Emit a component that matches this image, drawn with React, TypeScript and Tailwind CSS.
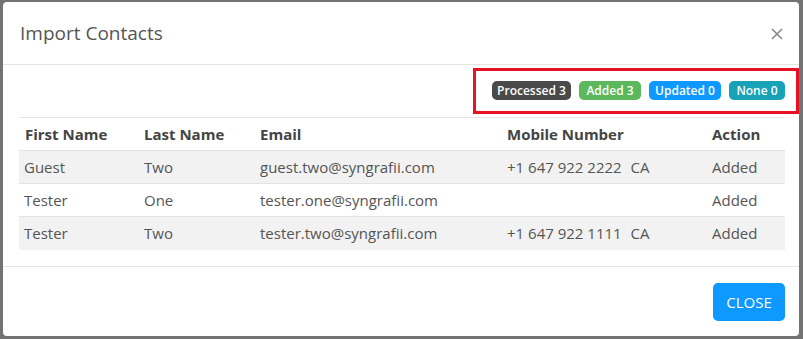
import React from 'react';

type Row = {
  first: string;
  last: string;
  email: string;
  mobile: string;
  country: string;
  action: string;
};

const rows: Row[] = [
  { first: 'Guest', last: 'Two', email: 'guest.two@syngrafii.com', mobile: '+1 647 922 2222', country: 'CA', action: 'Added' },
  { first: 'Tester', last: 'One', email: 'tester.one@syngrafii.com', mobile: '', country: '', action: 'Added' },
  { first: 'Tester', last: 'Two', email: 'tester.two@syngrafii.com', mobile: '+1 647 922 1111', country: 'CA', action: 'Added' },
];

const badges = [
  { label: 'Processed 3', cls: 'bg-[#4a4a4a] w-[79px]' },
  { label: 'Added 3', cls: 'bg-[#5cb85c] w-[62px]' },
  { label: 'Updated 0', cls: 'bg-[#0d99ff] w-[72px]' },
  { label: 'None 0', cls: 'bg-[#17a2b8] w-[56px]' },
];

export default function App() {
  return (
    <div
      className="w-[803px] h-[339px] bg-[#737373] pt-[2px] pl-[3px] overflow-hidden"
      style={{ fontFamily: '"Segoe UI", "Open Sans", "Noto Sans", sans-serif' }}
    >
      <div className="relative w-[796px] h-[334px] bg-white rounded-[4px] flex flex-col text-[#555]">
        {/* header */}
        <div className="h-[63px] border-b border-[#e5e5e5] flex items-center justify-between pl-[17px] pr-[16px] shrink-0">
          <h2 className="text-[19px] text-[#555] pt-[1px]">Import Contacts</h2>
          <svg width="12" height="12" viewBox="0 0 12 12" className="text-[#888] mt-[1px]">
            <path d="M1 1L11 11M11 1L1 11" stroke="currentColor" strokeWidth="1.6" />
          </svg>
        </div>

        {/* body */}
        <div className="pl-[16px] pr-[14px] pt-[16px] h-[202px] border-b border-[#e5e5e5] shrink-0">
          <div className="flex justify-end gap-[8px] h-[19px]">
            {badges.map((b) => (
              <span
                key={b.label}
                className={`${b.cls} text-white text-[12px] font-semibold leading-[19px] text-center rounded-[5px] whitespace-nowrap`}
              >
                {b.label}
              </span>
            ))}
          </div>

          <table className="mt-[17px] w-[766px] border-collapse text-[15px]">
            <thead>
              <tr className="border-t border-[#e5e5e5] h-[33px]">
                <th className="text-left font-bold text-[#444] pl-[6px] w-[125px]">First Name</th>
                <th className="text-left font-bold text-[#444] w-[116px]">Last Name</th>
                <th className="text-left font-bold text-[#444] w-[247px]">Email</th>
                <th className="text-left font-bold text-[#444] w-[205px]">Mobile Number</th>
                <th className="text-left font-bold text-[#444]">Action</th>
              </tr>
            </thead>
            <tbody>
              {rows.map((r, i) => (
                <tr
                  key={i}
                  className={`h-[33px] border-t border-[#e3e3e3] ${i % 2 === 0 ? 'bg-[#f2f2f2]' : 'bg-white'}`}
                >
                  <td className="pl-[5px]">{r.first}</td>
                  <td>{r.last}</td>
                  <td>{r.email}</td>
                  <td>
                    {r.mobile && (
                      <span>
                        {r.mobile}
                        <span className="ml-[9px]">{r.country}</span>
                      </span>
                    )}
                  </td>
                  <td>{r.action}</td>
                </tr>
              ))}
            </tbody>
          </table>
        </div>

        {/* footer */}
        <div className="flex justify-end pt-[16px] pr-[14px]">
          <button className="h-[38px] w-[72px] bg-[#0d99ff] text-white text-[15px] rounded-[5px]">
            CLOSE
          </button>
        </div>

        {/* annotation */}
        <div className="absolute left-[470px] top-[66px] w-[326px] h-[46px] border-[3px] border-[#e81123]" />
      </div>
    </div>
  );
}
